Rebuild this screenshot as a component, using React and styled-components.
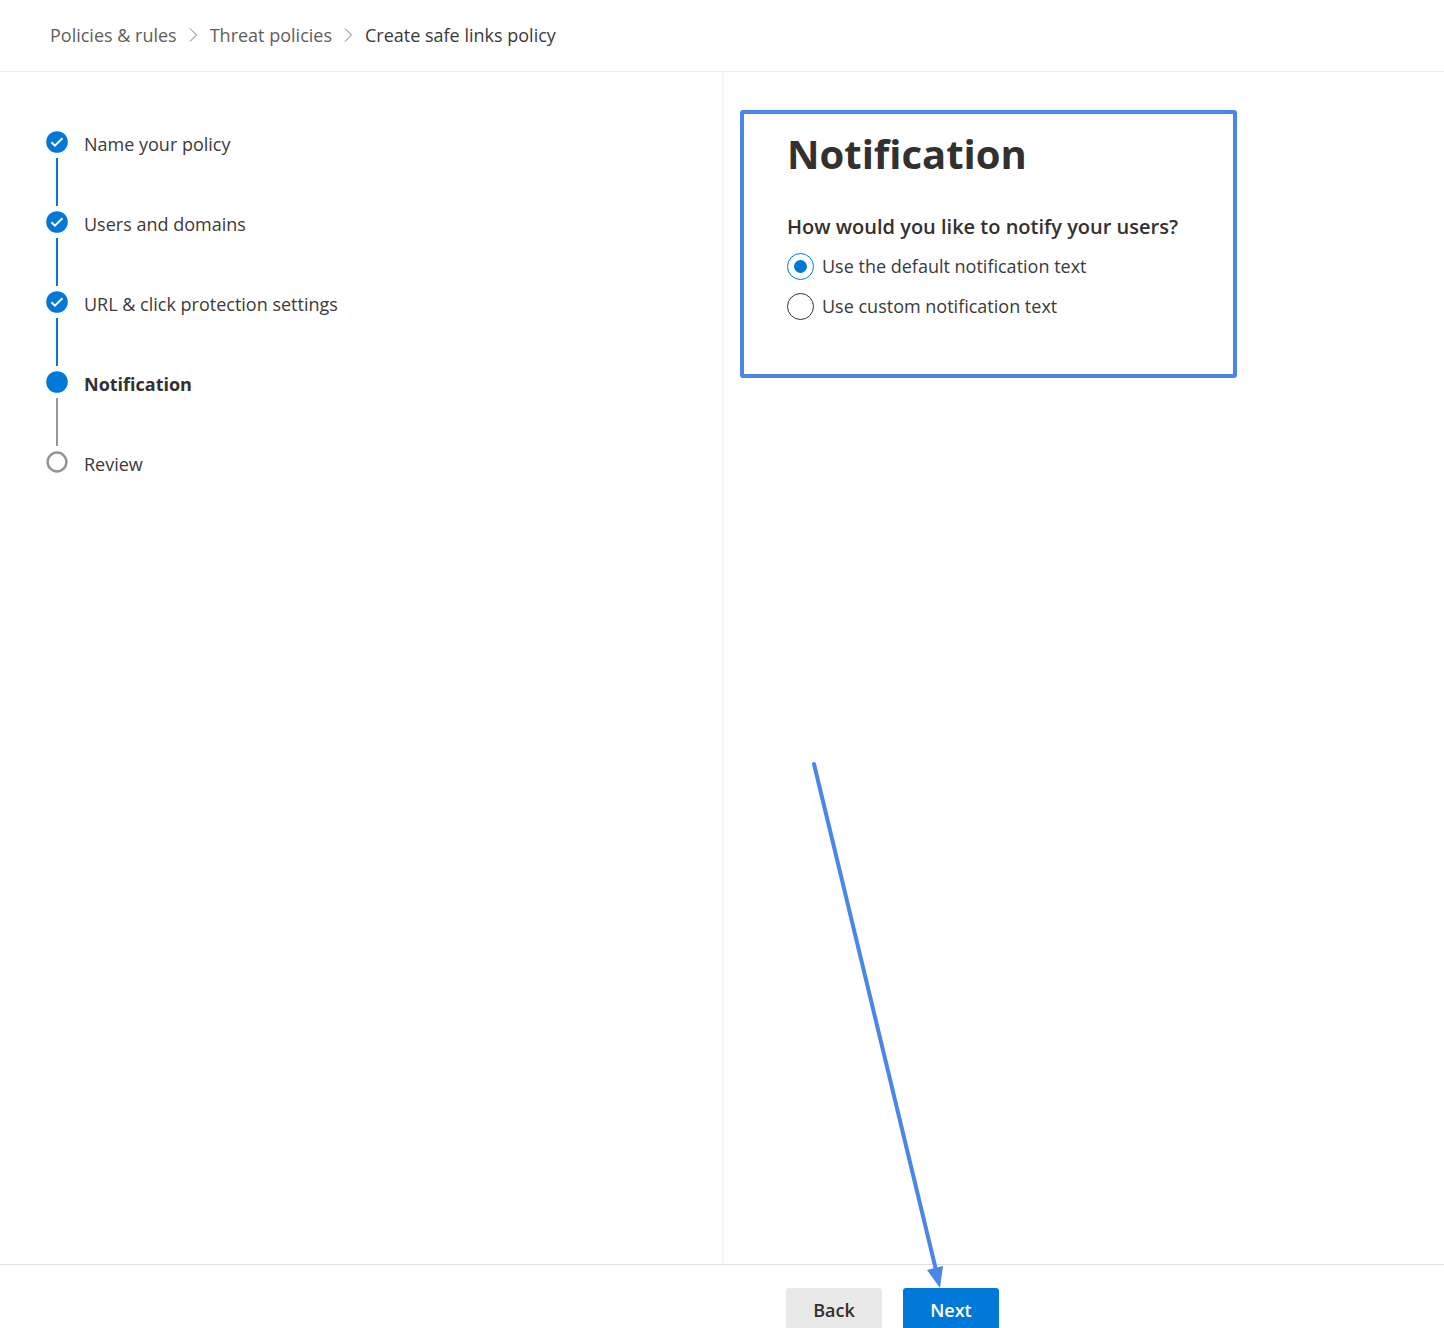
import React, { useState } from "react";
import styled, { createGlobalStyle } from "styled-components";

const GlobalStyle = createGlobalStyle`
  * {
    box-sizing: border-box;
  }
  body {
    margin: 0;
    background-color: #ffffff;
    color: #3b3a39;
    font-family: "Open Sans", "Noto Sans", sans-serif;
    font-size: 18px;
    line-height: 26px;
  }
`;

const Page = styled.div`
  display: flex;
  flex-direction: column;
  height: 100vh;
  overflow: hidden;
`;

const Breadcrumb = styled.nav`
  display: flex;
  align-items: center;
  flex-shrink: 0;
  gap: 11px;
  height: 72px;
  padding: 0 50px 2px;
  border-bottom: 1px solid #edebe9;
`;

const Crumb = styled.a`
  color: ${(props) => (props.$current ? "#3b3a39" : "#605e5c")};
  text-decoration: none;
`;

const Chevron = styled.svg`
  width: 11px;
  height: 16px;
  fill: none;
  stroke: #797775;
`;

const Main = styled.main`
  display: grid;
  grid-template-columns: 1fr 1fr;
  flex: 1;
`;

const Steps = styled.ol`
  list-style: none;
  margin: 0;
  padding: 59px 46px;
`;

const Step = styled.li`
  display: flex;
  align-items: flex-start;
  gap: 16px;
  color: ${(props) => (props.$current ? "#323130" : "inherit")};
  font-weight: ${(props) => (props.$current ? 700 : 400)};
`;

const Track = styled.div`
  display: flex;
  flex-direction: column;
  align-items: center;
`;

const Dot = styled.svg`
  display: block;
  width: 22px;
  height: 22px;
`;

const Line = styled.div`
  width: 2px;
  height: 48px;
  margin: 5px 0;
  background-color: ${(props) => (props.$done ? "#0078d7" : "#979593")};
`;

const Content = styled.section`
  padding: 38px 16px;
  border-left: 2px solid #f6f6f6;
`;

const Highlight = styled.div`
  width: fit-content;
  padding: 12px 55px 42px 43px;
  border: 4px solid #4a86e8;
  border-radius: 3px;
`;

const Title = styled.h1`
  margin: 0 0 32px;
  color: #323130;
  font-size: 40px;
  line-height: 56px;
`;

const Choices = styled.fieldset`
  margin: 0;
  padding: 0;
  border: none;
`;

const Question = styled.legend`
  margin-bottom: 12px;
  padding: 0;
  color: #323130;
  font-size: 20px;
  font-weight: 600;
`;

const Choice = styled.label`
  display: flex;
  align-items: center;
  gap: 8px;
  height: 28px;
  margin-bottom: 12px;
`;

const Radio = styled.input`
  appearance: none;
  display: grid;
  place-items: center;
  width: 27px;
  height: 27px;
  margin: 0;
  border: 1px solid #323130;
  border-radius: 50%;
  &:checked {
    border-color: #0078d7;
  }
  &:checked::before {
    content: "";
    width: 13px;
    height: 13px;
    border-radius: 50%;
    background-color: #0078d7;
  }
`;

const Footer = styled.footer`
  display: flex;
  flex-shrink: 0;
  gap: 21px;
  height: 64px;
  padding-top: 23px;
  padding-left: calc(50% + 64px);
  border-top: 1px solid #e1dfdd;
`;

const Button = styled.button`
  width: 96px;
  height: 44px;
  padding: 0;
  border: none;
  border-radius: 3px;
  background-color: ${(props) => (props.$primary ? "#0078d7" : "#e8e8e8")};
  color: ${(props) => (props.$primary ? "#ffffff" : "#323130")};
  font-family: inherit;
  font-size: 18px;
  font-weight: 600;
`;

const NextAnchor = styled.div`
  position: relative;
`;

/* hangs over the page, tip resting on the Next button */
const Arrow = styled.svg`
  position: absolute;
  right: 50px;
  bottom: 100%;
  width: 144px;
  height: 528px;
  pointer-events: none;
`;

const steps = [
  { name: "Name your policy", state: "done" },
  { name: "Users and domains", state: "done" },
  { name: "URL & click protection settings", state: "done" },
  { name: "Notification", state: "current" },
  { name: "Review", state: "todo" },
];

const Separator = () => (
  <Chevron viewBox="0 0 11 16" aria-hidden="true">
    <path d="M2 1.5l6.5 6.5-6.5 6.5" />
  </Chevron>
);

const StepDot = ({ state }) => (
  <Dot viewBox="0 0 22 22" aria-hidden="true">
    {state === "todo" ? (
      <circle cx="11" cy="11" r="9.4" fill="none" stroke="#979593" strokeWidth="2.5" />
    ) : (
      <circle cx="11" cy="11" r="10.8" fill="#0078d7" />
    )}
    {state === "done" && (
      <path d="M5.4 11.2l3.5 3.5 7.6-7.4" fill="none" stroke="#fff" strokeWidth="2" />
    )}
  </Dot>
);

const App = () => {
  const [choice, setChoice] = useState("default");

  return (
    <Page>
      <GlobalStyle />
      <Breadcrumb aria-label="Breadcrumb">
        <Crumb href="#policies">Policies &amp; rules</Crumb>
        <Separator />
        <Crumb href="#threat">Threat policies</Crumb>
        <Separator />
        <Crumb href="#create" $current aria-current="page">Create safe links policy</Crumb>
      </Breadcrumb>
      <Main>
        <Steps>
          {steps.map((step, i) => (
            <Step key={step.name} $current={step.state === "current"}>
              <Track>
                <StepDot state={step.state} />
                {i < steps.length - 1 && <Line $done={step.state === "done"} />}
              </Track>
              <span>{step.name}</span>
            </Step>
          ))}
        </Steps>
        <Content>
          <Highlight>
            <Title>Notification</Title>
            <Choices>
              <Question>How would you like to notify your users?</Question>
              <Choice>
                <Radio
                  type="radio"
                  name="notify"
                  checked={choice === "default"}
                  onChange={() => setChoice("default")}
                />
                Use the default notification text
              </Choice>
              <Choice>
                <Radio
                  type="radio"
                  name="notify"
                  checked={choice === "custom"}
                  onChange={() => setChoice("custom")}
                />
                Use custom notification text
              </Choice>
            </Choices>
          </Highlight>
        </Content>
      </Main>
      <Footer>
        <Button type="button">Back</Button>
        <NextAnchor>
          <Button type="button" $primary>Next</Button>
          <Arrow viewBox="0 0 144 528" aria-hidden="true">
            <path d="M9 4L131 510" fill="none" stroke="#4a86e8" strokeWidth="4" strokeLinecap="round" />
            <path d="M122 510l16-4-3 22z" fill="#4a86e8" />
          </Arrow>
        </NextAnchor>
      </Footer>
    </Page>
  );
};

export default App;
